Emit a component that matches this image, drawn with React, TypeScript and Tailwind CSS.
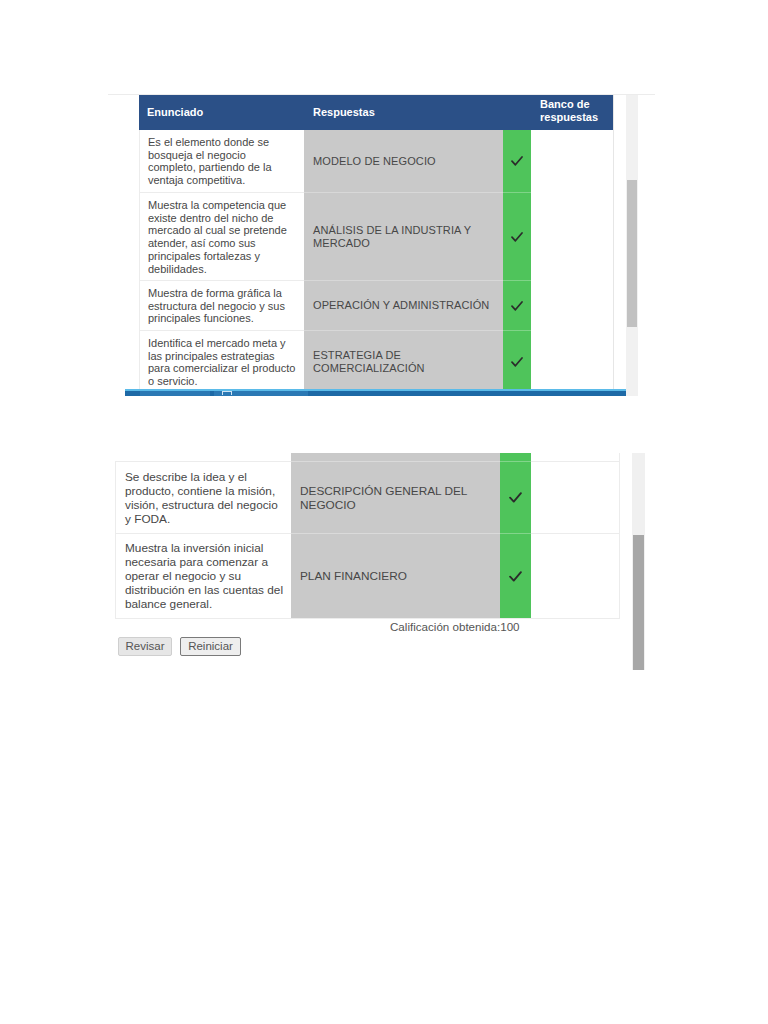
import React from "react";

const Check = ({ big = false }: { big?: boolean }) => (
  <svg
    width={big ? 13 : 12}
    height={big ? 11 : 10}
    viewBox="0 0 12 10"
    fill="none"
    aria-hidden
  >
    <path d="M1 5.2 L4.4 8.8 L11 1" stroke="#2b2b2b" strokeWidth="1.7" strokeLinecap="round" strokeLinejoin="round" />
  </svg>
);

type Row = { left: string[]; right: string[]; h: string };

const rows1: Row[] = [
  {
    left: ["Es el elemento donde se", "bosqueja el negocio", "completo, partiendo de la", "ventaja competitiva."],
    right: ["MODELO DE NEGOCIO"],
    h: "h-[63px]",
  },
  {
    left: [
      "Muestra la competencia que",
      "existe dentro del nicho de",
      "mercado al cual se pretende",
      "atender, así como sus",
      "principales fortalezas y",
      "debilidades.",
    ],
    right: ["ANÁLISIS DE LA INDUSTRIA Y", "MERCADO"],
    h: "h-[88px]",
  },
  {
    left: ["Muestra de forma gráfica la", "estructura del negocio y sus", "principales funciones."],
    right: ["OPERACIÓN Y ADMINISTRACIÓN"],
    h: "h-[50px]",
  },
  {
    left: [
      "Identifica el mercado meta y",
      "las principales estrategias",
      "para comercializar el producto",
      "o servicio.",
    ],
    right: ["ESTRATEGIA DE", "COMERCIALIZACIÓN"],
    h: "h-[62px]",
  },
];

const rows2: Row[] = [
  {
    left: [
      "Se describe la idea y el",
      "producto, contiene la misión,",
      "visión, estructura del negocio",
      "y FODA.",
    ],
    right: ["DESCRIPCIÓN GENERAL DEL", "NEGOCIO"],
    h: "h-[72px]",
  },
  {
    left: [
      "Muestra la inversión inicial",
      "necesaria para comenzar a",
      "operar el negocio y su",
      "distribución en las cuentas del",
      "balance general.",
    ],
    right: ["PLAN FINANCIERO"],
    h: "h-[85px]",
  },
];

export default function App() {
  return (
    <div className="w-[768px] h-[1024px] bg-white flex flex-col font-['Liberation_Sans',Arial,sans-serif] text-[#444]">
      {/* Screenshot 1 */}
      <div className="mt-[94px] ml-[108px] w-[547px] border-t border-[#ececec] flex">
        <div className="ml-[17px] w-[501px] flex flex-col">
          <div className="h-[294px] overflow-hidden pl-[14px]">
            <div className="w-[475px] border-r border-[#e6e6e6]">
              <div className="grid grid-cols-[165px_199px_28px_82px] h-[35px] bg-[#2b5087] text-white font-bold text-[11px]">
                <div className="flex items-center pl-[8px]">Enunciado</div>
                <div className="flex items-center pl-[9px] col-span-2">Respuestas</div>
                <div className="flex items-center pl-[9px] pb-[4px] leading-[13px]">
                  Banco de
                  <br />
                  respuestas
                </div>
              </div>
              {rows1.map((r, i) => (
                <div key={i} className={`grid grid-cols-[165px_199px_28px_82px] ${r.h}`}>
                  <div className="border-b border-l border-[#ececec] bg-white pl-[8px] pt-[6px] text-[11px] leading-[12.7px] text-[#474747]">
                    {r.left.map((t, j) => (
                      <div key={j} className="whitespace-nowrap">{t}</div>
                    ))}
                  </div>
                  <div className="border-b border-[#d8d8d8] bg-[#c9c9c9] pl-[9px] flex flex-col justify-center text-[11px] leading-[12.7px] text-[#474747] tracking-[0.1px]">
                    {r.right.map((t, j) => (
                      <div key={j} className="whitespace-nowrap">{t}</div>
                    ))}
                  </div>
                  <div className="border-b border-[#7fd488] bg-[#4fc45b] flex items-center justify-center">
                    <Check />
                  </div>
                  <div className="border-b border-white bg-white" />
                </div>
              ))}
            </div>
          </div>
          <div className="h-[7px] flex flex-col">
            <div className="h-[2px] bg-[#5bbbe9]" />
            <div className="h-[5px] bg-[#1d69a6] flex pl-[15px] gap-[4px]">
              <div className="w-[70px] h-[5px] bg-[#2a78b4]" />
              <div className="w-[94px] h-[5px] bg-[#2a78b4] pl-[8px]">
                <div className="w-[10px] h-[4px] border-t border-x border-[#cfe3f3]" />
              </div>
            </div>
          </div>
        </div>
        <div className="w-[12px] h-[301px] bg-[#f1f1f1] flex flex-col">
          <div className="h-[85px]" />
          <div className="h-[147px] mx-[1px] bg-[#c1c1c1]" />
        </div>
      </div>

      {/* Screenshot 2 */}
      <div className="mt-[57px] ml-[115px] flex">
        <div className="w-[505px] flex flex-col">
          <div className="grid grid-cols-[176px_209px_31px_89px] h-[8px]">
            <div className="bg-white" />
            <div className="bg-[#c9c9c9]" />
            <div className="bg-[#4fc45b]" />
            <div className="bg-white border-r border-[#ececec]" />
          </div>
          <div className="border-l border-r border-[#ececec]">
            {rows2.map((r, i) => (
              <div key={i} className={`grid grid-cols-[175px_209px_31px_88px] ${r.h}`}>
                <div className="border-t border-[#ececec] bg-white pl-[9px] flex flex-col justify-center text-[11.8px] leading-[14px] text-[#474747]">
                  {r.left.map((t, j) => (
                    <div key={j} className="whitespace-nowrap">{t}</div>
                  ))}
                </div>
                <div className="border-t border-[#dadada] bg-[#c9c9c9] pl-[9px] flex flex-col justify-center text-[11.8px] leading-[14px] text-[#474747]">
                  {r.right.map((t, j) => (
                    <div key={j} className="whitespace-nowrap">{t}</div>
                  ))}
                </div>
                <div className="border-t border-[#82d58b] bg-[#4fc45b] flex items-center justify-center">
                  <Check big />
                </div>
                <div className="border-t border-[#ececec] bg-white" />
              </div>
            ))}
            <div className="h-[1px] bg-[#ececec]" />
          </div>
          <div className="pl-[275px] mt-[1px] h-[14px] leading-[14px] text-[11.6px] text-[#555] whitespace-nowrap">
            Calificación obtenida:100
          </div>
          <div className="flex gap-[8px] ml-[3px] mt-[3px]">
            <button className="w-[54px] h-[19px] bg-[#e6e6e6] border border-[#cfcfcf] rounded-[2px] text-[11.5px] text-[#555] leading-[17px]">
              Revisar
            </button>
            <button className="w-[61px] h-[19px] bg-[#eeeeee] border border-[#7a7a7a] rounded-[2px] text-[11.5px] text-[#555] leading-[17px]">
              Reiniciar
            </button>
          </div>
        </div>
        <div className="ml-[12px] w-[13px] h-[217px] bg-[#f0f0f0] flex flex-col">
          <div className="h-[82px]" />
          <div className="h-[135px] mx-[1px] bg-[#a7a7a7]" />
        </div>
      </div>
    </div>
  );
}
